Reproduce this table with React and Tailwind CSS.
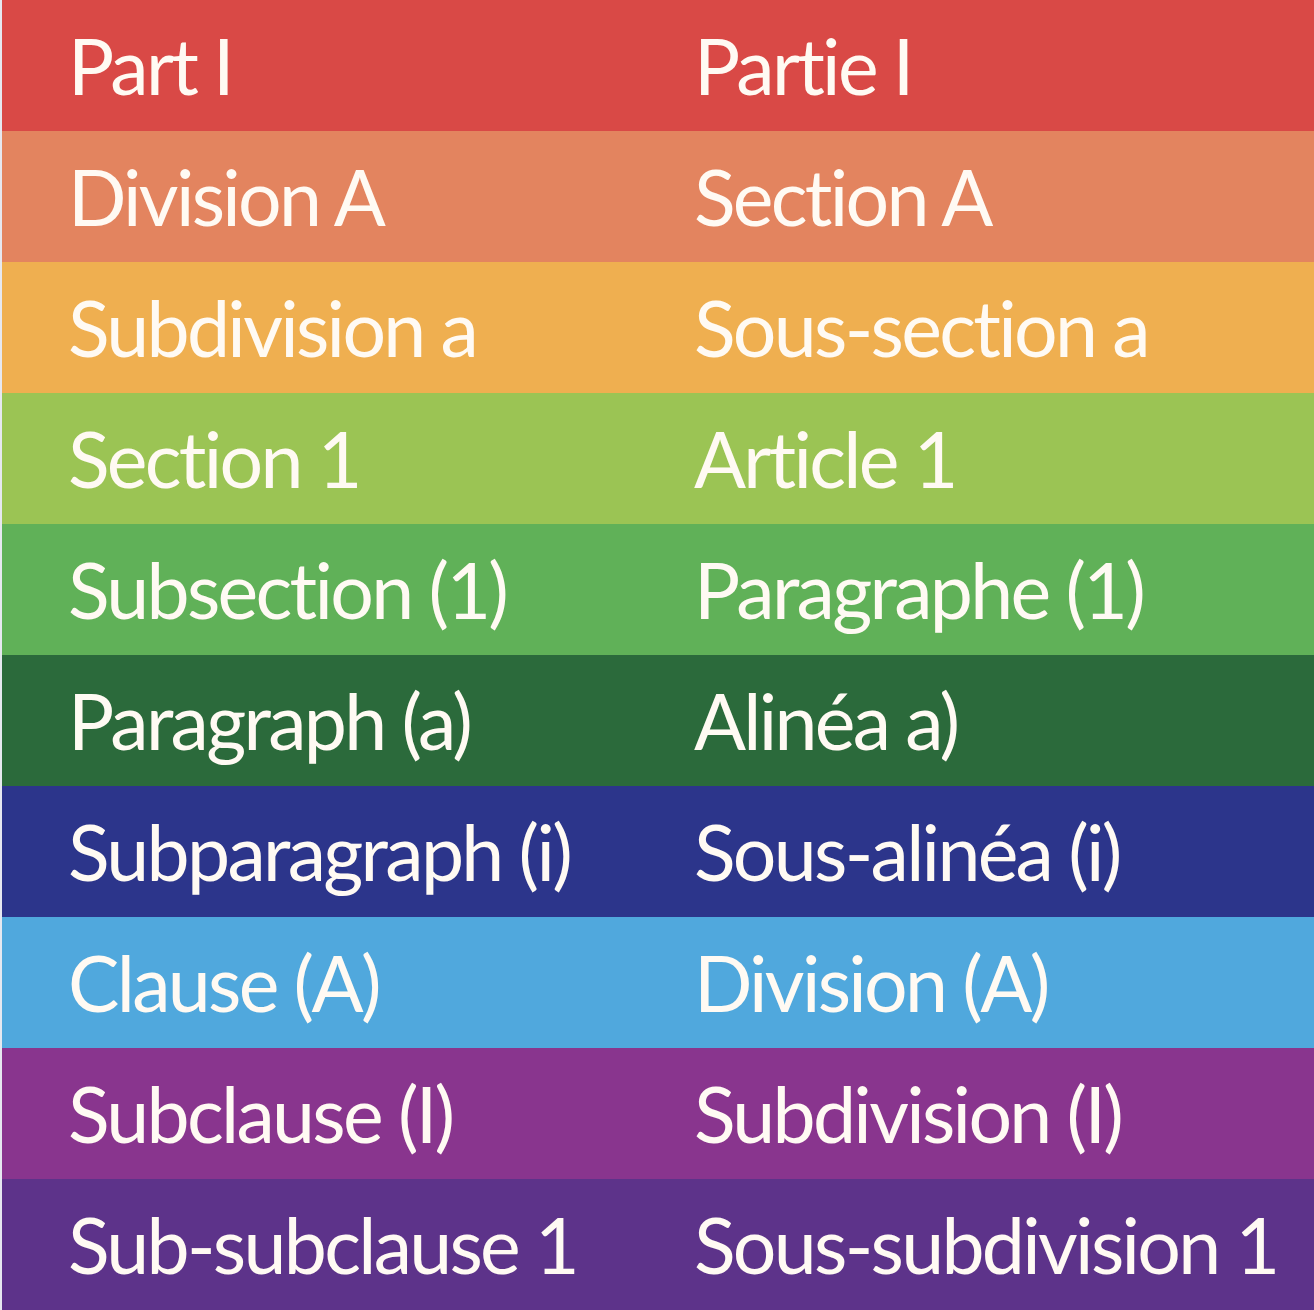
const rows = [
  { bg: 'bg-[#d94946]', en: 'Part I', fr: 'Partie I' },
  { bg: 'bg-[#e3845f]', en: 'Division A', fr: 'Section A' },
  { bg: 'bg-[#efaf50]', en: 'Subdivision a', fr: 'Sous-section a' },
  { bg: 'bg-[#9bc454]', en: 'Section 1', fr: 'Article 1' },
  { bg: 'bg-[#60b158]', en: 'Subsection (1)', fr: 'Paragraphe (1)' },
  { bg: 'bg-[#2b6a3b]', en: 'Paragraph (a)', fr: 'Alinéa a)' },
  { bg: 'bg-[#2c358b]', en: 'Subparagraph (i)', fr: 'Sous-alinéa (i)' },
  { bg: 'bg-[#50a8dd]', en: 'Clause (A)', fr: 'Division (A)' },
  { bg: 'bg-[#89358e]', en: 'Subclause (I)', fr: 'Subdivision (I)' },
  { bg: 'bg-[#5d338a]', en: 'Sub-subclause 1', fr: 'Sous-subdivision 1' },
];

export default function App() {
  return (
    <div className="w-[1314px] h-[1310px] flex flex-col font-['Lato',sans-serif] text-[#fffaf3]">
      {rows.map((r) => (
        <div key={r.en} className={`${r.bg} h-[131px] flex items-center border-l-2 border-[#e6e8f0]`}>
          <div className="w-[692px] shrink-0 pl-[66px] text-[77px] leading-none tracking-[-2.7px]">{r.en}</div>
          <div className="flex-1 text-[77px] leading-none tracking-[-2.7px]">{r.fr}</div>
        </div>
      ))}
    </div>
  );
}
